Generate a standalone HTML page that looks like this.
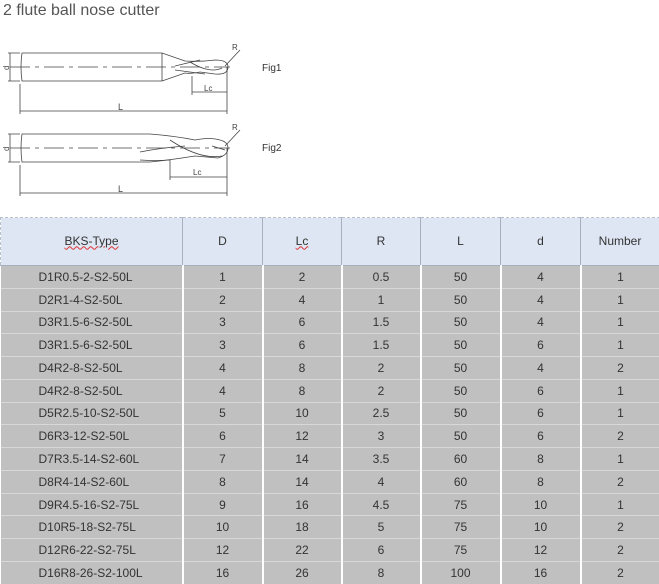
<!DOCTYPE html>
<html><head><meta charset="utf-8"><style>
body{margin:0;width:659px;height:584px;background:#fff;font-family:"Liberation Sans",sans-serif;position:relative;overflow:hidden}
.title{position:absolute;left:3px;top:2px;font-size:16px;color:#555}
.fig{position:absolute;font-size:10px;color:#333}
table{position:absolute;left:0;top:217px;border-collapse:collapse;width:659px;table-layout:fixed;font-size:12px;color:#333}
td{text-align:center;padding:0;height:21.77px;line-height:14px;background:#c0c0c0;border-left:2px solid #fff;border-top:1px solid #d8d8d8}
td:first-child{border-left:none;text-align:left;padding-left:38px}
th{font-weight:normal;background:#dde6f2;height:45px;border-left:1px solid #a8b0bc;border-top:1px dashed #b8c0cc;border-bottom:1px solid #a8b0bc;font-size:12px;color:#333;padding:0 0 2px 0}
th:first-child{border-left:1px dashed #b8c0cc}
th:last-child{border-right:1px dashed #b8c0cc}
.sq{text-decoration:underline wavy #d33;text-decoration-thickness:1px}
</style></head><body>
<div class="title">2 flute ball nose cutter</div>
<svg style="position:absolute;left:0;top:30px" width="260" height="175" viewBox="0 30 260 175" fill="none" stroke="#444" stroke-width="0.8">
<path d="M22 53 H162 L185 61 Q200 62 215 60 Q228 60 228 67 Q228 75 215 74 L200 72 Q190 74 185 73 L162 81 H22 Q20 67 22 53Z"/>
<path d="M162 53 V81 M175 66 L200 60 M175 70 L205 74 M190 62 Q210 74 222 68"/>
<path d="M10 67 H230" stroke-dasharray="20 5 4 5"/>
<path d="M8 53 H20 M8 81 H20 M10 53 V81 M20 84 V114 M227 67 V114 M192 76 V95 M20 111 H227 M192 92 H227 M225 66 L240 50"/>
<text x="3" y="70" font-size="8" fill="#444" stroke="none" transform="rotate(-90 6 67)">d</text>
<text x="118" y="110" font-size="9" fill="#444" stroke="none">L</text>
<text x="204" y="91" font-size="8" fill="#444" stroke="none">Lc</text>
<text x="232" y="50" font-size="8" fill="#444" stroke="none">R</text>
<path d="M22 134 H150 Q175 136 195 140 Q210 137 220 140 Q228 142 228 148 Q228 155 218 158 L195 156 Q170 160 150 162 H22 Q20 148 22 134Z"/>
<path d="M140 152 Q160 148 185 146 M140 160 Q155 161 170 160 M170 140 Q200 160 222 156 M212 146 L225 150"/>
<path d="M10 148 H230" stroke-dasharray="20 5 4 5"/>
<path d="M8 134 H20 M8 162 H20 M10 134 V162 M20 165 V196 M227 148 V196 M170 160 V180 M20 193 H227 M170 177 H227 M225 146 L240 130"/>
<text x="3" y="151" font-size="8" fill="#444" stroke="none" transform="rotate(-90 6 148)">d</text>
<text x="118" y="192" font-size="9" fill="#444" stroke="none">L</text>
<text x="193" y="175" font-size="8" fill="#444" stroke="none">Lc</text>
<text x="232" y="130" font-size="8" fill="#444" stroke="none">R</text>
</svg>
<div class="fig" style="left:262px;top:63px">Fig1</div>
<div class="fig" style="left:262px;top:143px">Fig2</div>
<table>
<colgroup><col style="width:182px"><col style="width:80px"><col style="width:79px"><col style="width:79px"><col style="width:80px"><col style="width:80px"><col style="width:79px"></colgroup>
<tr><th><span class="sq">BKS-Type</span></th><th>D</th><th><span class="sq">Lc</span></th><th>R</th><th>L</th><th>d</th><th>Number</th></tr>
<tr><td>D1R0.5-2-S2-50L</td><td>1</td><td>2</td><td>0.5</td><td>50</td><td>4</td><td>1</td></tr>
<tr><td>D2R1-4-S2-50L</td><td>2</td><td>4</td><td>1</td><td>50</td><td>4</td><td>1</td></tr>
<tr><td>D3R1.5-6-S2-50L</td><td>3</td><td>6</td><td>1.5</td><td>50</td><td>4</td><td>1</td></tr>
<tr><td>D3R1.5-6-S2-50L</td><td>3</td><td>6</td><td>1.5</td><td>50</td><td>6</td><td>1</td></tr>
<tr><td>D4R2-8-S2-50L</td><td>4</td><td>8</td><td>2</td><td>50</td><td>4</td><td>2</td></tr>
<tr><td>D4R2-8-S2-50L</td><td>4</td><td>8</td><td>2</td><td>50</td><td>6</td><td>1</td></tr>
<tr><td>D5R2.5-10-S2-50L</td><td>5</td><td>10</td><td>2.5</td><td>50</td><td>6</td><td>1</td></tr>
<tr><td>D6R3-12-S2-50L</td><td>6</td><td>12</td><td>3</td><td>50</td><td>6</td><td>2</td></tr>
<tr><td>D7R3.5-14-S2-60L</td><td>7</td><td>14</td><td>3.5</td><td>60</td><td>8</td><td>1</td></tr>
<tr><td>D8R4-14-S2-60L</td><td>8</td><td>14</td><td>4</td><td>60</td><td>8</td><td>2</td></tr>
<tr><td>D9R4.5-16-S2-75L</td><td>9</td><td>16</td><td>4.5</td><td>75</td><td>10</td><td>1</td></tr>
<tr><td>D10R5-18-S2-75L</td><td>10</td><td>18</td><td>5</td><td>75</td><td>10</td><td>2</td></tr>
<tr><td>D12R6-22-S2-75L</td><td>12</td><td>22</td><td>6</td><td>75</td><td>12</td><td>2</td></tr>
<tr><td>D16R8-26-S2-100L</td><td>16</td><td>26</td><td>8</td><td>100</td><td>16</td><td>2</td></tr>
</table>
</body></html>
